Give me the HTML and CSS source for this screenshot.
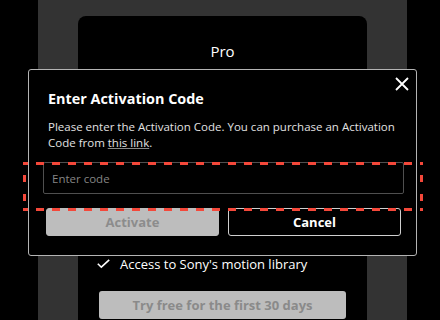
FILE: index.html
```html
<!DOCTYPE html>
<html lang="en">
<head>
<meta charset="utf-8">
<title>Enter Activation Code</title>
<link rel="stylesheet" href="styles.css">
</head>
<body>
<div class="page">
  <div class="panel">
    <div class="card">
      <h2 class="plan">Pro</h2>
      <ul class="features">
        <li>
          <svg class="check" width="13" height="10" viewBox="0 0 13 10"><path d="M0.8 4.8 L4.3 8.2 L12.2 0.8" fill="none" stroke="#fff" stroke-width="1.6"/></svg>
          <span>Access to Sony's motion library</span>
        </li>
      </ul>
      <button class="trial" type="button">Try free for the first 30 days</button>
    </div>
  </div>

  <div class="dialog" role="dialog">
    <button class="close" type="button" aria-label="Close">
      <svg width="14" height="14" viewBox="0 0 14 14"><path d="M1 1 L13 13 M13 1 L1 13" stroke="#fff" stroke-width="1.8" fill="none"/></svg>
    </button>
    <h3 class="title">Enter Activation Code</h3>
    <p class="desc">Please enter the Activation Code. You can purchase an Activation Code from <a class="link" href="#">this link</a>.</p>
    <input class="code" type="text" placeholder="Enter code">
    <div class="actions">
      <button class="btn btn-activate" type="button">Activate</button>
      <button class="btn btn-cancel" type="button">Cancel</button>
    </div>
  </div>

  <div class="highlight"></div>
</div>
</body>
</html>
```

FILE: styles.css
```css
* { box-sizing: border-box; }

html, body {
  margin: 0;
  padding: 0;
  background: #000;
}

body {
  font-family: "Open Sans", "Noto Sans", sans-serif;
  color: #fff;
}

.page {
  position: relative;
  width: 440px;
  height: 320px;
  overflow: hidden;
  background: #000;
}

.panel {
  margin-left: 38px;
  width: 369px;
  height: 320px;
  background: #333;
  padding-top: 16px;
}

.card {
  margin: 0 40px;
  height: 330px;
  background: #000;
  border-radius: 8px;
  padding-top: 25px;
}

.plan {
  margin: 0;
  font-size: 15px;
  font-weight: 400;
  line-height: 20px;
  text-align: center;
  color: #fff;
}

.features {
  list-style: none;
  margin: 194px 0 0;
  padding: 0 0 0 19px;
}

.features li {
  display: flex;
  align-items: center;
  gap: 10px;
  font-size: 13px;
  line-height: 18px;
  color: #fff;
}

.check { display: block; flex: none; }

.trial {
  display: block;
  margin: 18px 0 0 21px;
  width: 247px;
  height: 28px;
  border: none;
  border-radius: 3px;
  background: #bdbdbd;
  color: #8a8a8a;
  font-family: inherit;
  font-size: 13px;
  font-weight: 700;
  padding: 0;
}

.dialog {
  position: absolute;
  left: 28px;
  top: 69px;
  width: 389px;
  height: 187px;
  border: 1px solid #b4b4b4;
  border-radius: 3px;
  background: #000;
  padding: 20px 12px 19px 14px;
}

.close {
  position: absolute;
  top: 7px;
  right: 7px;
  width: 14px;
  height: 14px;
  padding: 0;
  border: none;
  background: none;
}
.close svg { display: block; }

.title {
  margin: 0;
  padding-left: 5px;
  font-size: 14.4px;
  line-height: 18px;
  font-weight: 700;
  color: #fff;
}

.desc {
  margin: 11px 0 0;
  padding-left: 5px;
  font-size: 11.5px;
  line-height: 16px;
  color: #e2e2e2;
}

.link {
  color: #e2e2e2;
  text-decoration: underline;
  text-decoration-color: #8a8a8a;
  text-underline-offset: 1px;
}

.code {
  display: block;
  margin-top: 11px;
  width: 100%;
  height: 32px;
  border: 1px solid #4f4f4f;
  border-radius: 2px;
  background: #000;
  padding: 0 8px;
  font-family: inherit;
  font-size: 11.5px;
  color: #fff;
  outline: none;
}
.code::placeholder { color: #858585; }

.actions {
  display: flex;
  gap: 9px;
  margin-top: 14px;
  padding: 0 3px 0 3px;
}

.btn {
  flex: 1;
  height: 28px;
  border-radius: 3px;
  font-family: inherit;
  font-size: 13px;
  font-weight: 700;
  padding: 0;
}

.btn-activate {
  background: #bdbdbd;
  border: 1px solid #bdbdbd;
  color: #8c8c8c;
}

.btn-cancel {
  background: #000;
  border: 1px solid #cfcfcf;
  color: #fff;
}

.highlight {
  position: absolute;
  left: 23px;
  top: 162px;
  width: 400px;
  height: 49px;
  pointer-events: none;
  background:
    repeating-linear-gradient(90deg, #f4483a 0 8px, transparent 8px 16px) -3px 0 / 403px 3px no-repeat,
    repeating-linear-gradient(90deg, #f4483a 0 8px, transparent 8px 16px) -3px 100% / 403px 3px no-repeat,
    linear-gradient(180deg, #f4483a 0 3px, transparent 3px 13px, #f4483a 13px 20px, transparent 20px 32px, #f4483a 32px 39px, transparent 39px 46px, #f4483a 46px 49px) 0 0 / 3px 100% no-repeat,
    linear-gradient(180deg, #f4483a 0 3px, transparent 3px 13px, #f4483a 13px 20px, transparent 20px 32px, #f4483a 32px 39px, transparent 39px 46px, #f4483a 46px 49px) 100% 0 / 3px 100% no-repeat;
}
```
